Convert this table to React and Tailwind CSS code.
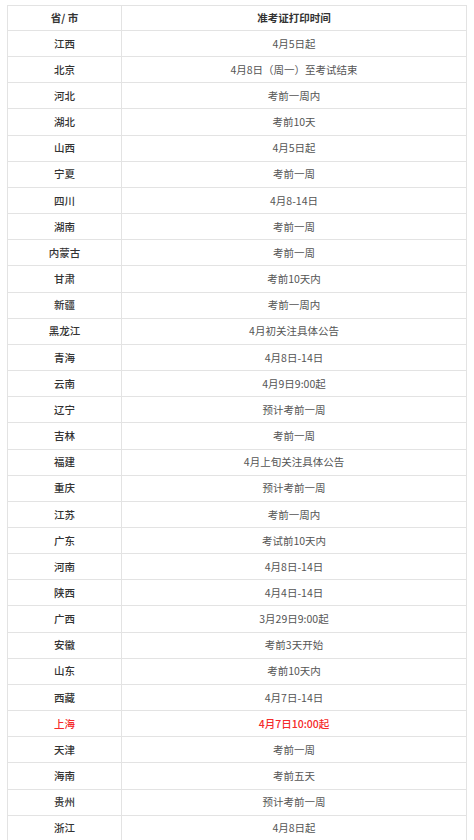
import React from "react";

const rows = [
  ["江西", "4月5日起"],
  ["北京", "4月8日（周一）至考试结束"],
  ["河北", "考前一周内"],
  ["湖北", "考前10天"],
  ["山西", "4月5日起"],
  ["宁夏", "考前一周"],
  ["四川", "4月8-14日"],
  ["湖南", "考前一周"],
  ["内蒙古", "考前一周"],
  ["甘肃", "考前10天内"],
  ["新疆", "考前一周内"],
  ["黑龙江", "4月初关注具体公告"],
  ["青海", "4月8日-14日"],
  ["云南", "4月9日9:00起"],
  ["辽宁", "预计考前一周"],
  ["吉林", "考前一周"],
  ["福建", "4月上旬关注具体公告"],
  ["重庆", "预计考前一周"],
  ["江苏", "考前一周内"],
  ["广东", "考试前10天内"],
  ["河南", "4月8日-14日"],
  ["陕西", "4月4日-14日"],
  ["广西", "3月29日9:00起"],
  ["安徽", "考前3天开始"],
  ["山东", "考前10天内"],
  ["西藏", "4月7日-14日"],
  ["上海", "4月7日10:00起", true],
  ["天津", "考前一周"],
  ["海南", "考前五天"],
  ["贵州", "预计考前一周"],
  ["浙江", "4月8日起"],
];

export default function App() {
  return (
    <div
      className="bg-white w-[474px] h-[840px] overflow-hidden pt-[5px] pl-[7px] text-[10.5px] text-[#333]"
      style={{ fontFamily: '"Noto Sans CJK SC", "Noto Sans", sans-serif' }}
    >
      <table className="border-collapse w-[460px] table-fixed">
        <colgroup>
          <col className="w-[114px]" />
          <col />
        </colgroup>
        <thead>
          <tr className="h-[25px]">
            <th className="border border-[#e3e3e3] font-bold text-center p-0">省/ 市</th>
            <th className="border border-[#e3e3e3] font-bold text-center p-0">准考证打印时间</th>
          </tr>
        </thead>
        <tbody>
          {rows.map(([prov, time, hot]) => (
            <tr key={prov} className="h-[26.17px]">
              <td
                className={`border border-[#e3e3e3] text-center p-0 font-medium ${
                  hot ? "text-[#f52a2a]" : "text-[#333]"
                }`}
              >
                {prov}
              </td>
              <td
                className={`border border-[#e3e3e3] text-center p-0 ${
                  hot ? "text-[#f52a2a] font-medium" : "text-[#555]"
                }`}
              >
                {time}
              </td>
            </tr>
          ))}
        </tbody>
      </table>
    </div>
  );
}
